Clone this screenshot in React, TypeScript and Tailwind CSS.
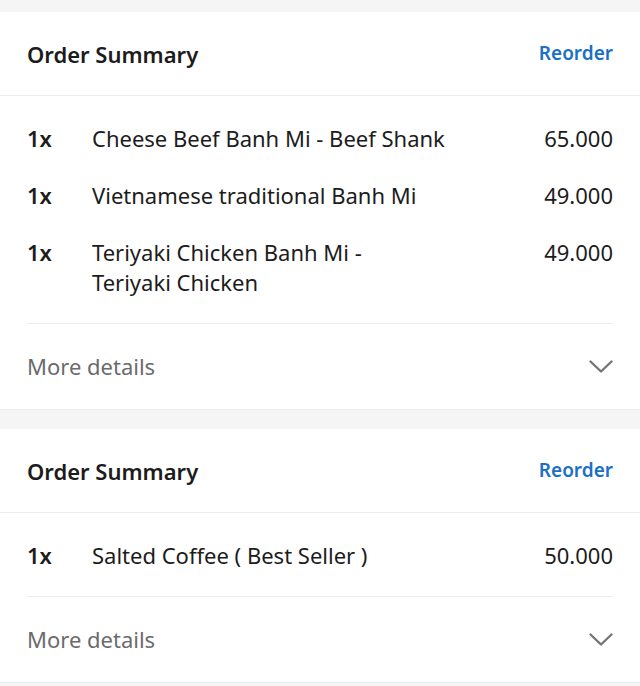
import React from "react";

type Item = { qty: string; name: string; price: string };

const orders: Item[][] = [
  [
    { qty: "1x", name: "Cheese Beef Banh Mi - Beef Shank", price: "65.000" },
    { qty: "1x", name: "Vietnamese traditional Banh Mi", price: "49.000" },
    { qty: "1x", name: "Teriyaki Chicken Banh Mi -\nTeriyaki Chicken", price: "49.000" },
  ],
  [{ qty: "1x", name: "Salted Coffee ( Best Seller )", price: "50.000" }],
];

function Chevron() {
  return (
    <svg width="24" height="14" viewBox="0 0 24 14" fill="none">
      <path d="M1.5 1.5 L12 11.5 L22.5 1.5" stroke="#757575" strokeWidth="2.4" strokeLinecap="round" strokeLinejoin="round" />
    </svg>
  );
}

function Card({ items }: { items: Item[] }) {
  return (
    <div className="bg-white">
      <div className="h-[84px] px-[27px] flex items-center justify-between border-b border-[#ebebeb]">
        <span className="text-[22px] font-semibold text-[#1c1c1c] leading-none">Order Summary</span>
        <span className="text-[19px] font-semibold text-[#1b70c6] leading-none">Reorder</span>
      </div>
      <div className="px-[27px]">
        <div className="pt-[27px] pb-[26px] flex flex-col gap-[27px] border-b border-[#ededed]">
          {items.map((it, i) => (
            <div key={i} className="flex items-start text-[22px] leading-[30px] text-[#1c1c1c]">
              <span className="w-[65px] shrink-0 font-semibold">{it.qty}</span>
              <span className="flex-1 max-w-[400px] whitespace-pre-line">{it.name}</span>
              <span className="ml-auto shrink-0">{it.price}</span>
            </div>
          ))}
        </div>
        <div className="h-[85px] flex items-center justify-between">
          <span className="text-[22px] text-[#6b6b6b]">More details</span>
          <Chevron />
        </div>
      </div>
      <div className="h-px bg-[#ebebeb]" />
    </div>
  );
}

export default function App() {
  return (
    <div
      className="w-[640px] h-[686px] overflow-hidden bg-[#f5f5f5] pt-[12px] flex flex-col gap-[19px]"
      style={{ fontFamily: '"Noto Sans", "Open Sans", sans-serif' }}
    >
      {orders.map((items, i) => (
        <Card key={i} items={items} />
      ))}
    </div>
  );
}
